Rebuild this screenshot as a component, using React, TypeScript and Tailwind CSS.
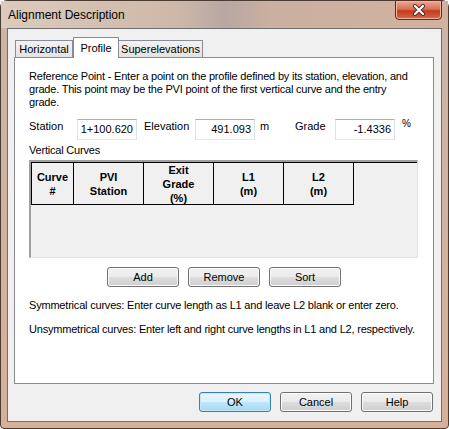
const btn =
  'h-[20px] w-[72px] rounded-[3px] border border-[#707070] bg-[linear-gradient(#f2f2f2_0%,#ebebeb_50%,#dddddd_51%,#cfcfcf_100%)] text-[11px] leading-none text-black shadow-[inset_0_0_0_1px_#fbfbfb]'

const okBtn =
  'h-[20px] w-[72px] rounded-[3px] border border-[#3c7fb1] bg-[linear-gradient(#eaf6fd_0%,#d9f0fc_50%,#bee6fd_51%,#a7d9f5_100%)] text-[11px] leading-none text-black shadow-[inset_0_0_0_1px_#c4e5f6]'

const field =
  'flex h-[21px] w-[60px] items-center justify-end border border-[#abadb3] border-b-[#e3e9ef] border-l-[#e2e3ea] border-r-[#dbdfe6] bg-white pr-[3px] text-[11px]'

type Column = { width: string; lines: string[] }

const columns: Column[] = [
  { width: 'w-[42px]', lines: ['Curve', '#'] },
  { width: 'w-[70px]', lines: ['PVI', 'Station'] },
  { width: 'w-[70px]', lines: ['Exit', 'Grade', '(%)'] },
  { width: 'w-[70px]', lines: ['L1', '(m)'] },
  { width: 'w-[70px]', lines: ['L2', '(m)'] },
]

const CloseGlyph = () => (
  <svg width="14" height="12" viewBox="0 0 14 12">
    <path d="M3 2 L11 10 M11 2 L3 10" stroke="#4a2b22" strokeWidth="4" strokeLinecap="round" />
    <path d="M3 2 L11 10 M11 2 L3 10" stroke="#ffffff" strokeWidth="2.2" strokeLinecap="round" />
  </svg>
)

export default function App() {
  return (
    <div className="h-[429px] w-[449px] bg-white font-['Liberation_Sans',Arial,sans-serif] text-black">
      <div className="relative h-[429px] w-[449px] rounded-t-[7px] rounded-b-[4px] border border-[#4a3b33] bg-[linear-gradient(180deg,#d4c4b8_0px,#cbb5a6_28px,#d8b09a_100%)]">
        {/* title bar */}
        <div className="flex h-[27px] items-center bg-[linear-gradient(90deg,#dccbbd_0%,#cdb7a8_40%,#b8a7a3_50%,#c9b0a0_60%,#d2b29e_100%)] pl-[7px]">
          <span className="font-['Liberation_Sans',sans-serif] text-[12px] text-black">Alignment Description</span>
        </div>
        <div className="absolute right-[6px] top-[-1px] flex h-[20px] w-[47px] items-center justify-center rounded-b-[4px] border border-[#5b2a1f] bg-[linear-gradient(#e9a996_0%,#d7725a_45%,#c23b1e_55%,#d9694a_100%)] shadow-[inset_0_0_0_1px_#f0b7a6]">
          <CloseGlyph />
        </div>

        {/* client area */}
        <div className="mx-[6px] h-[394px] border border-[#6f6f6f] bg-[#f0f0f0] pl-[6px] pr-[8px] pt-[8px]">
          <div className="relative z-10 flex h-[21px] items-end pl-[1px] text-[11px]">
            <div className="mb-[1px] flex h-[17px] w-[58px] items-center justify-center border border-b-0 border-[#898c95] bg-[linear-gradient(#f2f2f2,#e3e3e3)]">
              Horizontal
            </div>
            <div className="flex h-[21px] w-[46px] items-start justify-center border border-b-0 border-[#898c95] bg-white pt-[2px]">
              Profile
            </div>
            <div className="mb-[1px] flex h-[17px] w-[84px] items-center justify-center border border-b-0 border-l-0 border-[#898c95] bg-[linear-gradient(#f2f2f2,#e3e3e3)]">
              Superelevations
            </div>
          </div>

          <div className="-mt-[1px] h-[327px] w-[420px] border border-[#898c95] bg-white pl-[14px] pt-[12px] text-[11px] leading-[13px]">
            <p className="tracking-[-0.2px]">
              Reference Point - Enter a point on the profile defined by its station, elevation, and
              <br />
              grade. This point may be the PVI point of the first vertical curve and the entry
              <br />
              grade.
            </p>

            <div className="mt-[10px] flex items-start">
              <span className="w-[48px] pt-[1px]">Station</span>
              <div className={field}>1+100.620</div>
              <span className="w-[58px] pl-[7px] pt-[1px]">Elevation</span>
              <div className={field}>491.093</div>
              <span className="w-[40px] pl-[5px] pt-[1px]">m</span>
              <span className="w-[40px] pt-[1px]">Grade</span>
              <div className={field}>-1.4336</div>
              <span className="pl-[7px] text-[10px] leading-[10px]">%</span>
            </div>

            <div className="mt-[4px] tracking-[-0.2px]">Vertical Curves</div>

            <div className="mt-[3px] h-[98px] w-[389px] border-b border-l-2 border-r border-t-2 border-b-[#e3e3e3] border-l-[#a0a0a0] border-r-[#e3e3e3] border-t-[#a0a0a0] bg-[#f0f0f0]">
              <div className="flex border-l border-t border-black">
                {columns.map((col) => (
                  <div
                    key={col.lines.join(' ')}
                    className={`${col.width} flex h-[42px] flex-col items-center justify-center border-b border-r border-black text-[11px] font-bold leading-[14px]`}
                  >
                    {col.lines.map((line) => (
                      <span key={line}>{line}</span>
                    ))}
                  </div>
                ))}
              </div>
            </div>

            <div className="mt-[9px] flex justify-center gap-[9px] pr-[14px]">
              <button className={btn}>Add</button>
              <button className={btn}>Remove</button>
              <button className={btn}>Sort</button>
            </div>

            <p className="mt-[12px] tracking-[-0.2px]">
              Symmetrical curves: Enter curve length as L1 and leave L2 blank or enter zero.
            </p>
            <p className="mt-[11px] tracking-[-0.2px]">
              Unsymmetrical curves: Enter left and right curve lengths in L1 and L2, respectively.
            </p>
          </div>

          <div className="mt-[8px] flex justify-end gap-[9px]">
            <button className={okBtn}>OK</button>
            <button className={btn}>Cancel</button>
            <button className={btn}>Help</button>
          </div>
        </div>
      </div>
    </div>
  )
}
